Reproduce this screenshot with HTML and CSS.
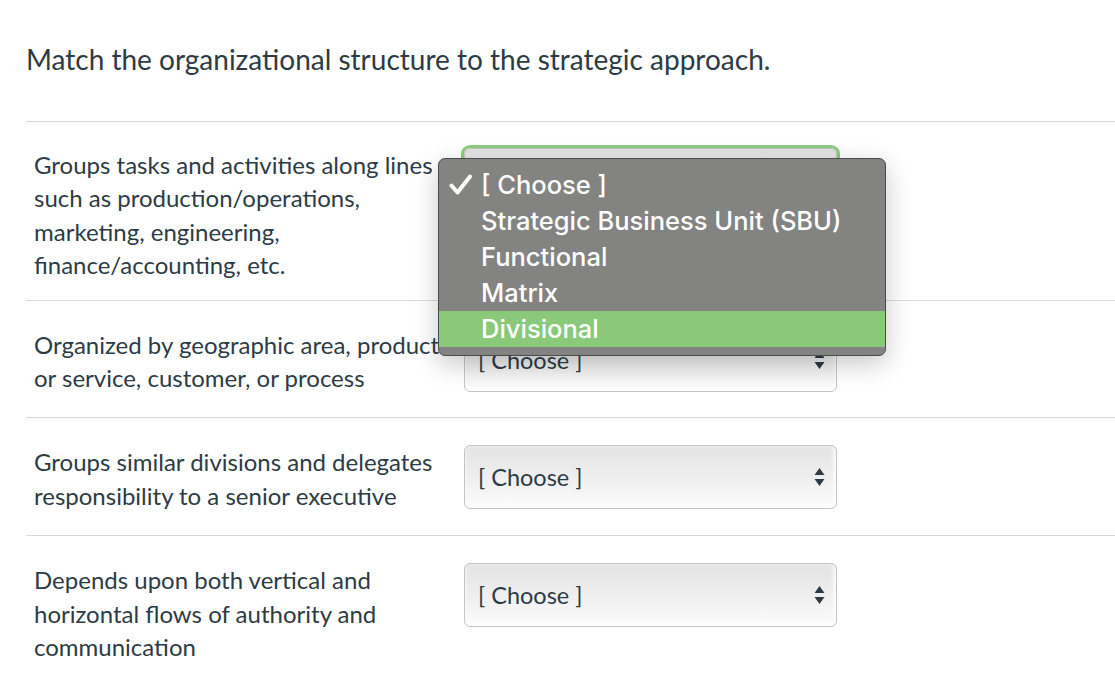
FILE: index.html
```html
<!DOCTYPE html>
<html>
<head>
<meta charset="utf-8">
<link rel="stylesheet" href="styles.css">
</head>
<body>
<div class="page">
  <h1 class="title">Match the organizational structure to the strategic approach.</h1>

  <div class="row row-first">
    <div class="label">Groups tasks and activities along lines such as production/operations, marketing, engineering, finance/accounting, etc.</div>
    <div class="select-wrap">
      <div class="select focused">
        <span class="value">[ Choose ]</span>
        <svg class="arrows" width="11" height="22" viewBox="0 0 11 22"><path d="M5.5 2 L10.5 9 L0.5 9 Z M0.5 13 L10.5 13 L5.5 20 Z" fill="#2d3b45"/></svg>
      </div>
      <ul class="menu">
        <li class="item checked"><svg class="check" width="24" height="22" viewBox="0 0 24 22"><path d="M2.5 11.5 L8.5 18.5 L21 2.5" fill="none" stroke="#fff" stroke-width="4" stroke-linecap="round" stroke-linejoin="round"/></svg>[ Choose ]</li>
        <li class="item">Strategic Business Unit (SBU)</li>
        <li class="item">Functional</li>
        <li class="item">Matrix</li>
        <li class="item active">Divisional</li>
      </ul>
    </div>
  </div>

  <div class="row">
    <div class="label">Organized by geographic area, product or service, customer, or process</div>
    <div class="select-wrap">
      <div class="select">
        <span class="value">[ Choose ]</span>
        <svg class="arrows" width="11" height="22" viewBox="0 0 11 22"><path d="M5.5 2 L10.5 9 L0.5 9 Z M0.5 13 L10.5 13 L5.5 20 Z" fill="#2d3b45"/></svg>
      </div>
    </div>
  </div>

  <div class="row">
    <div class="label">Groups similar divisions and delegates responsibility to a senior executive</div>
    <div class="select-wrap">
      <div class="select">
        <span class="value">[ Choose ]</span>
        <svg class="arrows" width="11" height="22" viewBox="0 0 11 22"><path d="M5.5 2 L10.5 9 L0.5 9 Z M0.5 13 L10.5 13 L5.5 20 Z" fill="#2d3b45"/></svg>
      </div>
    </div>
  </div>

  <div class="row">
    <div class="label">Depends upon both vertical and horizontal flows of authority and communication</div>
    <div class="select-wrap">
      <div class="select">
        <span class="value">[ Choose ]</span>
        <svg class="arrows" width="11" height="22" viewBox="0 0 11 22"><path d="M5.5 2 L10.5 9 L0.5 9 Z M0.5 13 L10.5 13 L5.5 20 Z" fill="#2d3b45"/></svg>
      </div>
    </div>
  </div>
</div>
</body>
</html>
```

FILE: styles.css
```css
html, body {
  margin: 0;
  padding: 0;
  background: #fff;
}

body {
  font-family: Lato, "Open Sans", sans-serif;
  color: #2d3b45;
  overflow: hidden;
}

.page {
  padding-left: 26px;
}

.title {
  margin: 0 0 45px 0;
  padding-top: 42px;
  font-size: 28px;
  font-weight: 400;
  line-height: 34px;
}

.row {
  display: flex;
  align-items: flex-start;
  border-top: 1px solid #d9d9d9;
  padding: 27px 0 23px 8px;
}

.row-first {
  padding-top: 26px;
  padding-bottom: 18px;
}

.label {
  width: 410px;
  font-size: 24px;
  line-height: 33.4px;
}

.select-wrap {
  position: relative;
  margin-left: 20px;
}

.select {
  box-sizing: border-box;
  width: 373px;
  height: 64px;
  border: 1px solid #c4c4c4;
  border-radius: 6px;
  background: linear-gradient(#e3e3e3, #f1f1f1 60%, #fcfcfc);
  box-shadow: inset 0 -3px 4px rgba(255, 255, 255, 0.9), inset -3px 0 4px rgba(255, 255, 255, 0.6);
  display: flex;
  align-items: center;
  justify-content: space-between;
  padding: 0 11px 0 13px;
  font-size: 23.5px;
}

.select.focused {
  box-shadow: 0 0 0 3px #8dcb80;
}

.arrows {
  display: block;
}

.menu {
  position: absolute;
  z-index: 10;
  left: -26px;
  top: 10px;
  box-sizing: border-box;
  width: 448px;
  margin: 0;
  padding: 8px 0;
  list-style: none;
  background: #838382;
  border: 1px solid #4b4b4b;
  border-radius: 7px;
  box-shadow: 0 8px 26px rgba(0, 0, 0, 0.22);
  font-family: Inter, Roboto, sans-serif;
  font-weight: 500;
  font-size: 25.5px;
  color: #fff;
}

.item {
  position: relative;
  height: 36px;
  line-height: 36px;
  padding-left: 42px;
  white-space: nowrap;
}

.item.active {
  background: #8bc97a;
}

.check {
  position: absolute;
  left: 10px;
  top: 7px;
}
```
